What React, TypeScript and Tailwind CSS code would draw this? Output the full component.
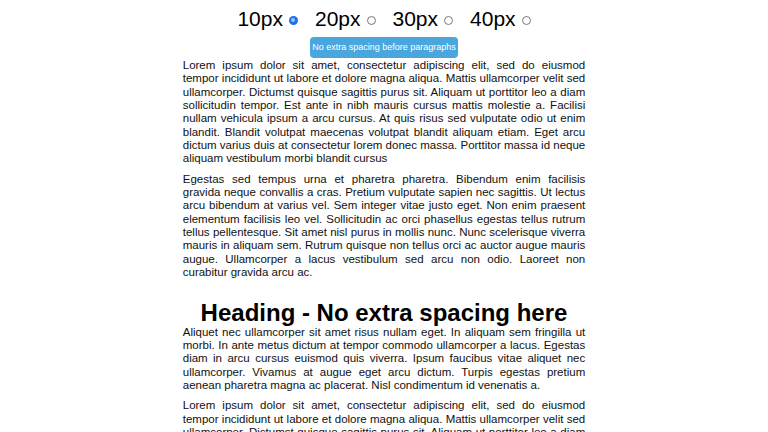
import React from "react";

const P1 =
  "Lorem ipsum dolor sit amet, consectetur adipiscing elit, sed do eiusmod tempor incididunt ut labore et dolore magna aliqua. Mattis ullamcorper velit sed ullamcorper. Dictumst quisque sagittis purus sit. Aliquam ut porttitor leo a diam sollicitudin tempor. Est ante in nibh mauris cursus mattis molestie a. Facilisi nullam vehicula ipsum a arcu cursus. At quis risus sed vulputate odio ut enim blandit. Blandit volutpat maecenas volutpat blandit aliquam etiam. Eget arcu dictum varius duis at consectetur lorem donec massa. Porttitor massa id neque aliquam vestibulum morbi blandit cursus";
const P2 =
  "Egestas sed tempus urna et pharetra pharetra. Bibendum enim facilisis gravida neque convallis a cras. Pretium vulputate sapien nec sagittis. Ut lectus arcu bibendum at varius vel. Sem integer vitae justo eget. Non enim praesent elementum facilisis leo vel. Sollicitudin ac orci phasellus egestas tellus rutrum tellus pellentesque. Sit amet nisl purus in mollis nunc. Nunc scelerisque viverra mauris in aliquam sem. Rutrum quisque non tellus orci ac auctor augue mauris augue. Ullamcorper a lacus vestibulum sed arcu non odio. Laoreet non curabitur gravida arcu ac.";
const P3 =
  "Aliquet nec ullamcorper sit amet risus nullam eget. In aliquam sem fringilla ut morbi. In ante metus dictum at tempor commodo ullamcorper a lacus. Egestas diam in arcu cursus euismod quis viverra. Ipsum faucibus vitae aliquet nec ullamcorper. Vivamus at augue eget arcu dictum. Turpis egestas pretium aenean pharetra magna ac placerat. Nisl condimentum id venenatis a.";

function Radio({ checked }: { checked: boolean }) {
  return checked ? (
    <span className="inline-flex w-[9px] h-[9px] rounded-full bg-[#1a73e8] items-center justify-center">
      <span className="w-[4px] h-[4px] rounded-full bg-[#9ec4f5]" />
    </span>
  ) : (
    <span className="inline-block w-[9px] h-[9px] rounded-full border border-[#767676] bg-white" />
  );
}

export default function App() {
  const opts = ["10px", "20px", "30px", "40px"];
  return (
    <div
      className="w-[768px] h-[432px] overflow-hidden bg-white text-black flex flex-col items-center"
      style={{ fontFamily: '"Liberation Sans", Arial, sans-serif' }}
    >
      <div className="shrink-0 flex items-center gap-[17px] h-[36px] pt-[1px]">
        {opts.map((o, i) => (
          <label key={o} className="flex items-center gap-[6px]">
            <span className="text-[21px] leading-[24px]">{o}</span>
            <span className="mt-[3px] flex">
              <Radio checked={i === 0} />
            </span>
          </label>
        ))}
      </div>
      <div className="shrink-0 mt-[1px] h-[21px] w-[148px] rounded-[4px] bg-[#4aa6df] text-white text-[9px] flex items-center justify-center">
        No extra spacing before paragraphs
      </div>
      <div className="shrink-0 pt-[1px] w-[402.5px] text-[11.5px] leading-[13.35px] text-justify text-[#111]">
        <p className="mt-0">{P1}</p>
        <p className="mt-[7px]">{P2}</p>
        <h1 className="mt-[19px] text-[24px] leading-[27px] font-bold text-center text-black">
          Heading - No extra spacing here
        </h1>
        <p className="mt-0">{P3}</p>
        <p className="mt-[7px]">{P1}</p>
      </div>
    </div>
  );
}
